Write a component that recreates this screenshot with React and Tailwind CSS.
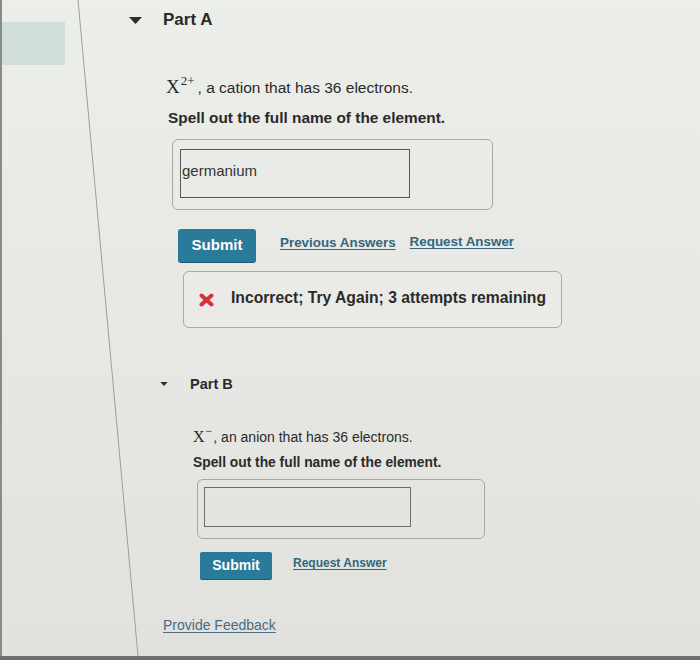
import React from "react";

function Caret({ size = 13 }) {
  return (
    <svg width={size} height={Math.round(size * 0.55)} viewBox="0 0 13 7">
      <polygon points="0,0 13,0 6.5,7" fill="#2b2b2b" />
    </svg>
  );
}

function RedX() {
  return (
    <svg width="15" height="14" viewBox="0 0 15 14">
      <line x1="2.5" y1="2.5" x2="12.5" y2="11.5" stroke="#d6313c" strokeWidth="4" strokeLinecap="round" />
      <line x1="12.5" y1="2.5" x2="2.5" y2="11.5" stroke="#d6313c" strokeWidth="4" strokeLinecap="round" />
    </svg>
  );
}

export default function App() {
  return (
    <div className="relative w-[700px] h-[660px] overflow-hidden bg-linear-to-b from-[#eceee9] via-[#e7e8e4] to-[#e1e2de] font-['Liberation_Sans',Arial,sans-serif] text-[#2a2a2a]">
      <div className="flex h-[656px] border-l-2 border-[#8a8a88]">
        <div className="w-[98px] shrink-0">
          <div className="mt-[22px] w-[63px] h-[43px] bg-[#d0ddd8]" />
        </div>
        <div className="flex-1 flex flex-col">
          {/* Part A */}
          <div className="mt-[10px] h-[20px] flex items-center">
            <div className="ml-[29px] flex items-center"><Caret /></div>
            <span className="ml-[21px] text-[17px] font-bold leading-[20px] text-[#2a2a2a]">Part A</span>
          </div>
          <div className="mt-[47px] ml-[66px] h-[21px] text-[15.5px] leading-[20px] text-[#2a2a2a]">
            <span className="font-['Liberation_Serif',serif] text-[19px]">X</span>
            <sup className="font-['Liberation_Serif',serif] text-[13px] -top-[0.6em] ml-[1px]">2+</sup>
            <span className="ml-[3px]">, a cation that has 36 electrons.</span>
          </div>
          <div className="mt-[10px] ml-[68px] text-[15.4px] font-bold leading-[20px] text-[#2a2a2a]">
            Spell out the full name of the element.
          </div>
          <div className="mt-[11px] ml-[72px] w-[321px] h-[71px] rounded-md border border-[#a6a8a5] pl-[7px] pt-[9px]">
            <div className="w-[230px] h-[49px] border-[1.5px] border-[#555755] flex items-center pb-[4px] pl-[1px] text-[15px] text-[#333]">
              germanium
            </div>
          </div>
          <div className="mt-[19px] ml-[78px] flex items-center">
            <div className="w-[78px] h-[33px] bg-[#2a7a99] rounded-[3px] flex items-center justify-center text-white text-[15px] font-bold shadow-[0_1px_0_#1d5a72]">
              Submit
            </div>
            <span className="ml-[24px] -mt-[4px] text-[13.4px] font-bold text-[#33667f] underline underline-offset-2">Previous Answers</span>
            <span className="ml-[14px] -mt-[6px] text-[13.4px] font-bold text-[#33667f] underline underline-offset-2">Request Answer</span>
          </div>
          <div className="mt-[9px] ml-[83px] w-[379px] h-[57px] rounded-md border border-[#a9aba8] bg-[#eaebe7] flex items-center pl-[15px]">
            <RedX />
            <span className="ml-[17px] -mt-[4px] text-[15.7px] font-bold text-[#2a2a2a]">Incorrect; Try Again; 3 attempts remaining</span>
          </div>

          {/* Part B */}
          <div className="mt-[46px] h-[20px] flex items-center">
            <div className="ml-[60px] flex items-center"><Caret size={8} /></div>
            <span className="ml-[22px] text-[14.5px] font-bold leading-[20px] text-[#2a2a2a]">Part B</span>
          </div>
          <div className="mt-[34px] ml-[93px] h-[18px] text-[14px] leading-[18px] text-[#2a2a2a]">
            <span className="font-['Liberation_Serif',serif] text-[16px]">X</span>
            <sup className="font-['Liberation_Serif',serif] text-[12px] -top-[0.6em] ml-[1px]">−</sup>
            <span className="ml-[1px]">, an anion that has 36 electrons.</span>
          </div>
          <div className="mt-[8px] ml-[93px] text-[13.8px] font-bold leading-[18px] text-[#2a2a2a]">
            Spell out the full name of the element.
          </div>
          <div className="mt-[7px] ml-[97px] w-[288px] h-[60px] rounded-md border border-[#a6a8a5] pl-[6px] pt-[7px]">
            <div className="w-[207px] h-[40px] border-[1.5px] border-[#6a6c6a]" />
          </div>
          <div className="mt-[13px] ml-[100px] flex items-center">
            <div className="w-[72px] h-[27px] bg-[#2a7a99] rounded-[2px] flex items-center justify-center text-white text-[14px] font-bold shadow-[0_1px_0_#1d5a72]">
              Submit
            </div>
            <span className="ml-[21px] -mt-[5px] text-[12px] font-bold text-[#33667f] underline underline-offset-2">Request Answer</span>
          </div>
          <div className="mt-[37px] ml-[63px] text-[14px] leading-[18px] text-[#4b6a80] underline underline-offset-2">
            Provide Feedback
          </div>
        </div>
      </div>
      <div className="h-[4px] bg-[#6e6e6c]" />
      <svg className="absolute inset-0 pointer-events-none" width="700" height="660">
        <line x1="78" y1="0" x2="138" y2="656" stroke="#9c9e9c" strokeWidth="1" />
      </svg>
    </div>
  );
}
